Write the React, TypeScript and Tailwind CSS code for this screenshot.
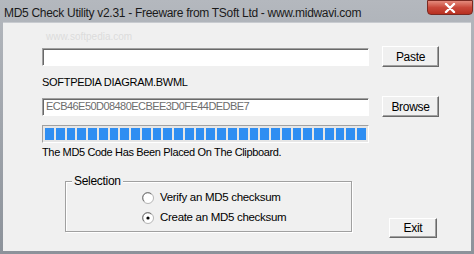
import React from "react";

const font = { fontFamily: '"Liberation Sans", Arial, sans-serif' };

const Button = ({ label, className = "" }: { label: string; className?: string }) => (
  <div
    className={`flex items-center justify-center bg-[#f0f0f0] border border-t-white border-l-white border-r-[#696969] border-b-[#696969] shadow-[inset_-1px_-1px_0_#a0a0a0] text-[12px] tracking-[-0.3px] text-black ${className}`}
  >
    {label}
  </div>
);

const TextBox = ({ value = "", className = "" }: { value?: string; className?: string }) => (
  <div
    className={`flex items-center bg-white border border-t-[#a0a0a0] border-l-[#a0a0a0] border-b-white border-r-white shadow-[inset_1px_1px_0_#696969] pl-[3px] text-[11px] tracking-[-0.55px] text-[#6d6d6d] ${className}`}
  >
    {value}
  </div>
);

const Radio = ({ checked }: { checked?: boolean }) => (
  <svg width="12" height="12" viewBox="0 0 12 12" className="shrink-0">
    <circle cx="6" cy="6" r="5.5" fill="#fff" stroke="#b4b4b4" />
    <path d="M2.2 9.3 A5 5 0 0 1 9.3 2.2" fill="none" stroke="#6f6f6f" strokeWidth="1" />
    {checked && <circle cx="6" cy="6" r="1.6" fill="#000" />}
  </svg>
);

const App: React.FC = () => {
  const blocks = Array.from({ length: 30 });

  return (
    <div className="w-[474px] h-[254px] overflow-hidden flex flex-col bg-gradient-to-b from-[#b4b8be] to-[#8c929a]" style={font}>
      {/* title bar */}
      <div className="relative h-[22px] shrink-0 flex items-start">
        <span className="pl-[4px] pt-[4px] text-[12px] tracking-[-0.3px] text-[#1a1a1a] whitespace-nowrap">
          MD5 Check Utility v2.31 - Freeware from TSoft Ltd - www.midwavi.com
        </span>
        <div className="absolute right-[1px] top-0 w-[46px] h-[15px] rounded-b-[4px] border border-[#7a2a22] bg-gradient-to-b from-[#e48a7c] via-[#c9483a] to-[#b8301f] flex items-center justify-center">
          <svg width="12" height="10" viewBox="0 0 12 10">
            <path d="M2 1 L10 9 M10 1 L2 9" stroke="#fff" strokeWidth="2.4" strokeLinecap="round" />
          </svg>
        </div>
      </div>

      {/* client area */}
      <div className="mx-[3px] mb-[3px] flex-1 bg-[#f0f0f0] border-t border-[#c8cbd0] flex flex-col pl-[39px] text-[11px] text-black">
        <div className="h-0 relative">
          <span className="absolute top-[6px] left-[4px] text-[10px] text-[#dcdcdc]">www.softpedia.com</span>
        </div>

        <div className="mt-[23px] flex items-center">
          <TextBox className="w-[327px] h-[18px]" />
          <Button label="Paste" className="ml-[13px] w-[57px] h-[21px]" />
        </div>

        <div className="mt-[9px] h-[13px] leading-[13px] tracking-[-0.3px]">SOFTPEDIA DIAGRAM.BWML</div>

        <div className="mt-[7px] flex items-center">
          <TextBox value="ECB46E50D08480ECBEE3D0FE44DEDBE7" className="w-[327px] h-[18px]" />
          <Button label="Browse" className="ml-[13px] w-[57px] h-[21px]" />
        </div>

        <div className="mt-[8px] w-[327px] h-[18px] border border-t-[#a0a0a0] border-l-[#a0a0a0] border-b-white border-r-white bg-[#e6e6e6] flex gap-[2px] p-[2px]">
          {blocks.map((_, i) => (
            <div key={i} className="w-[9px] h-full bg-[#2f8ef2]" />
          ))}
        </div>

        <div className="mt-[3px] h-[13px] leading-[13px] tracking-[-0.35px]">The MD5 Code Has Been Placed On The Clipboard.</div>

        <div className="mt-[22px] flex items-start">
          <div className="relative ml-[23px] w-[287px] h-[51px] border border-[#a0a0a0] shadow-[inset_1px_1px_0_#fff,1px_1px_0_#fff] flex flex-col pl-[76px] pt-[10px] gap-[8px]">
            <span className="absolute left-[6px] top-[-8px] px-[2px] bg-[#f0f0f0] text-[12px] leading-[14px] tracking-[-0.3px]">Selection</span>
            <div className="flex items-center gap-[6px] h-[12px] text-[11.5px] tracking-[-0.3px]">
              <Radio />
              <span>Verify an MD5 checksum</span>
            </div>
            <div className="flex items-center gap-[6px] h-[12px] text-[11.5px] tracking-[-0.3px]">
              <Radio checked />
              <span>Create an MD5 checksum</span>
            </div>
          </div>
          <Button label="Exit" className="ml-[37px] mt-[37px] w-[48px] h-[20px]" />
        </div>
      </div>
    </div>
  );
};

export default App;
